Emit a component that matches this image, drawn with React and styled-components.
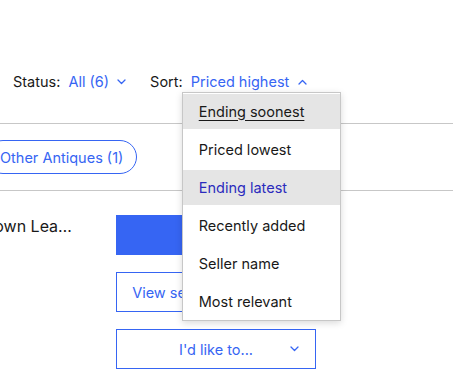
import styled, { createGlobalStyle } from 'styled-components';

const GlobalStyle = createGlobalStyle`
  body {
    margin: 0;
    font-family: Inter, "Open Sans", "Liberation Sans", sans-serif;
    color: #191919;
    background: #fff;
    overflow: hidden;
  }
`;

const BLUE = '#3665f3';

const sortOptions = [
  { label: 'Ending soonest', focused: true },
  { label: 'Priced lowest' },
  { label: 'Ending latest', hovered: true },
  { label: 'Recently added' },
  { label: 'Seller name' },
  { label: 'Most relevant' },
];

function Chevron({ up }) {
  return (
    <svg width="9" height="6" viewBox="0 0 9 6" fill="none">
      <polyline
        points={up ? '1,5 4.5,1.5 8,5' : '1,1 4.5,4.5 8,1'}
        stroke={BLUE}
        strokeWidth="1.3"
        strokeLinecap="round"
        strokeLinejoin="round"
      />
    </svg>
  );
}

function App() {
  return (
    <Page>
      <GlobalStyle />
      <Toolbar>
        <Filter>
          <Label>Status:</Label>
          <Value>All (6)</Value>
          <Chevron />
        </Filter>
        <Filter $wide>
          <Label>Sort:</Label>
          <SortWrap>
            <Value>Priced highest</Value>
            <Chevron up />
            <Menu>
              {sortOptions.map((o) => (
                <MenuItem key={o.label} $focused={o.focused} $hovered={o.hovered}>
                  {o.label}
                </MenuItem>
              ))}
            </Menu>
          </SortWrap>
        </Filter>
      </Toolbar>
      <Divider $top={31} />
      <PillRow>
        <Pill>Other Antiques (1)</Pill>
      </PillRow>
      <Divider $top={0} />
      <ItemRow>
        <Title>Brown Leather Doctor Bag</Title>
        <Actions>
          <PrimaryButton>Pay now</PrimaryButton>
          <OutlineButton>View seller's other items</OutlineButton>
          <OutlineButton>
            <span>I'd like to...</span>
            <MenuChevron>
              <Chevron />
            </MenuChevron>
          </OutlineButton>
        </Actions>
      </ItemRow>
    </Page>
  );
}

const Page = styled.div`
  width: 453px;
  height: 382px;
  overflow: hidden;
`;

const Toolbar = styled.div`
  display: flex;
  align-items: center;
  padding: 72px 13px 0;
  font-size: 14.5px;
  line-height: 20px;
`;

const Filter = styled.div`
  display: flex;
  align-items: center;
  gap: 8px;
  margin-left: ${(p) => (p.$wide ? '24px' : '0')};
`;

const Label = styled.span`
  color: #191919;
`;

const Value = styled.span`
  color: ${BLUE};
`;

const SortWrap = styled.div`
  position: relative;
  display: flex;
  align-items: center;
  gap: 9px;
`;

const Menu = styled.ul`
  position: absolute;
  top: 100%;
  left: -9px;
  width: 157px;
  margin: 0;
  padding: 1px 0 0;
  list-style: none;
  background: #fff;
  border: 1px solid #c7c7c7;
  box-shadow: 0 2px 7px rgba(0, 0, 0, 0.15);
  z-index: 10;
`;

const MenuItem = styled.li`
  height: 35px;
  margin-bottom: 3px;
  padding-left: 16px;
  display: flex;
  align-items: center;
  font-size: 14.5px;
  background: ${(p) => (p.$focused || p.$hovered ? '#e5e5e5' : 'transparent')};
  color: ${(p) => (p.$hovered ? '#2b2bbd' : '#191919')};
  text-decoration: ${(p) => (p.$focused ? 'underline' : 'none')};
  text-underline-offset: 3px;
  &:last-child {
    margin-bottom: 1px;
  }
`;

const Divider = styled.hr`
  margin: ${(p) => p.$top}px 0 0;
  border: 0;
  border-top: 1px solid #c7c7c7;
`;

const PillRow = styled.div`
  display: flex;
  padding: 16px 0;
  margin-left: -14px;
`;

const Pill = styled.button`
  height: 34px;
  padding: 0 13px;
  border: 1px solid ${BLUE};
  border-radius: 17px;
  background: #fff;
  color: ${BLUE};
  font: inherit;
  font-size: 14.5px;
`;

const ItemRow = styled.div`
  display: flex;
  align-items: flex-start;
  gap: 40px;
  padding-top: 24px;
  margin-left: -22px;
`;

const Title = styled.div`
  width: 98px;
  padding-top: 1px;
  font-size: 16px;
  line-height: 20px;
  white-space: nowrap;
  overflow: hidden;
  text-overflow: ellipsis;
`;

const Actions = styled.div`
  display: flex;
  flex-direction: column;
  gap: 17px;
  width: 200px;
`;

const ButtonBase = styled.button`
  position: relative;
  height: 40px;
  width: 100%;
  display: flex;
  align-items: center;
  justify-content: center;
  font: inherit;
  font-size: 14.5px;
  border: 1px solid ${BLUE};
  white-space: nowrap;
`;

const PrimaryButton = styled(ButtonBase)`
  background: ${BLUE};
  color: #fff;
`;

const OutlineButton = styled(ButtonBase)`
  background: #fff;
  color: ${BLUE};
`;

const MenuChevron = styled.span`
  position: absolute;
  right: 16px;
  top: 50%;
  transform: translateY(-50%);
  display: flex;
`;

export default App;
